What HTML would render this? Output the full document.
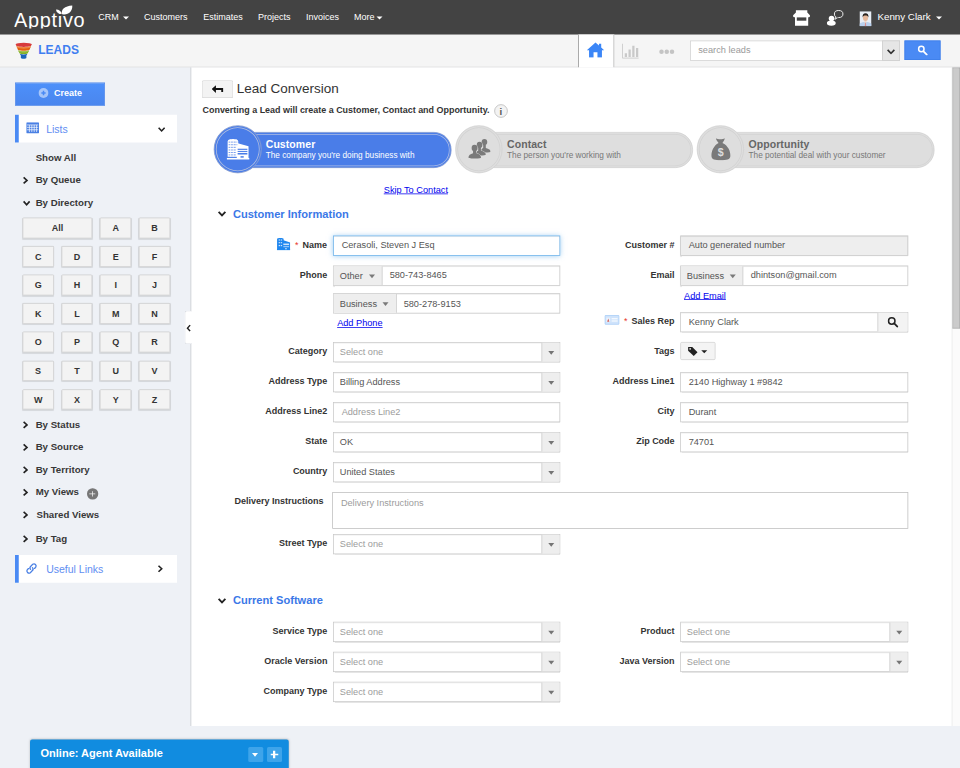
<!DOCTYPE html>
<html lang="en">
<head>
<meta charset="utf-8">
<title>Leads - Lead Conversion</title>
<style>
*{box-sizing:border-box;margin:0;padding:0}
html,body{width:960px;height:768px;overflow:hidden;background:#eef1f6}
body{font-family:"Liberation Sans",Arial,Helvetica,sans-serif;font-size:12px;color:#333}
#root{position:absolute;left:0;top:0;width:1280px;height:1024px;transform:scale(.75);transform-origin:0 0;background:#eef1f6;overflow:hidden}
.abs{position:absolute}
a{color:#0000ee;text-decoration:underline}
/* ---------- top bar ---------- */
#top{position:absolute;left:0;top:0;width:1280px;height:46.500px;background:#434343;border-bottom:1.300px solid #333}
#top .nav{position:absolute;top:0;height:46px;line-height:46px;color:#fff;font-size:12px;white-space:nowrap}
.caret{display:inline-block;width:0;height:0;border-left:4px solid transparent;border-right:4px solid transparent;border-top:4px solid #fff;vertical-align:middle;margin-left:3px}
/* ---------- sub bar ---------- */
#sub{position:absolute;left:0;top:46px;width:1280px;height:44.300px;background:#f5f5f5;border-bottom:1.600px solid #d2d2d2}
#sub .title{position:absolute;left:51px;top:0;line-height:42px;font-size:16px;font-weight:bold;color:#3f7ef0}

.logo{position:absolute;left:18.500px;top:8px;height:29.700px;overflow:hidden;font-size:26.500px;line-height:38px;color:#fff;letter-spacing:1px;font-weight:normal}
.hometab{position:absolute;left:770.700px;top:0;width:48.300px;height:44.300px;background:#fff;border-left:1.300px solid #8e8e8e;border-right:1.300px solid #b2b2b2}
.dots{position:absolute;left:879px;top:19.500px;width:24px;height:6px}
.dots i{display:block;float:left;width:6px;height:6px;border-radius:50%;background:#c4c4c4;margin-right:1.200px}
.srch{position:absolute;left:920px;top:8px;width:280px;height:27px;background:#fff;border:1px solid #d0d0d0}
.srch span{position:absolute;left:10px;top:0;line-height:24.500px;font-size:12.300px;color:#9a9a9a}
.srch b{position:absolute;right:-1px;top:-1px;width:24px;height:27px;background:#e6e6e6;border:1px solid #cdcdcd;display:block}
.srch b svg{position:absolute;left:5px;top:10px}
.sbtn{position:absolute;left:1206px;top:7.500px;width:48px;height:26px;background:#4a8af4;border:1px solid #3e7ee8}
.sbtn svg{position:absolute;left:16px;top:5px;width:14.500px;height:14.500px}
/* ---------- sidebar ---------- */
#side{position:absolute;left:0;top:90.300px;width:254px;height:935px;background:#eef1f6}

#sitems{position:absolute;left:0;top:0;width:256px;height:1024px}
.create{position:absolute;left:20px;top:110px;width:120px;height:31px;background:linear-gradient(#4d90fa,#4a86ee);border:1px solid #4481ea;color:#fff;font-weight:bold;font-size:12px;line-height:27.800px}
.create svg{position:absolute;left:30px;top:6.300px}
.create span{position:absolute;left:51px;top:0}
.sbox{position:absolute;left:20px;width:216px;height:37px;background:#fff;border-left:5px solid #4a8af4}
.sbt{position:absolute;top:1px;line-height:37px;font-size:14px;color:#5f8ef2}
.srow{position:absolute;left:0;width:250px;height:30px;line-height:30px;font-size:12.900px;font-weight:bold;color:#383838}
.srow span{position:absolute;left:47.500px;top:-1px;white-space:nowrap}
.srow .chv{position:absolute;left:30px;top:9.500px}
.srow .plus{position:absolute;left:116.300px;top:9.300px;width:14.500px;height:14.500px;border-radius:50%;background:#777}
.srow .plus:before{content:"";position:absolute;left:3.200px;top:6.400px;width:7.600px;height:1.200px;background:#f4f4f4}
.srow .plus:after{content:"";position:absolute;left:6.400px;top:3.200px;width:1.200px;height:7.600px;background:#f4f4f4}
.lb{position:absolute;width:41.700px;height:27.700px;background:#f3f3f3;border:1px solid #cdcdcd;border-radius:1.500px;text-align:center;font-weight:bold;font-size:12px;line-height:26px;color:#333;box-shadow:0 1px 1px rgba(0,0,0,.1)}
.handle{position:absolute;left:245.500px;top:413.500px;width:10.500px;height:45px;z-index:5;background:#fff;border:1px solid #dcdfe4;border-right:0;border-radius:3px 0 0 3px}
.handle svg{position:absolute;left:1.800px;top:17.500px}
/* ---------- content ---------- */
#main{position:absolute;left:253.700px;top:90.300px;width:1015.600px;height:877.500px;background:#fff;border-left:1.400px solid #c0c4ca}
#sbar{position:absolute;left:1269.300px;top:90.300px;width:10.700px;height:877.500px;background:#fbfbfb;border-left:1px solid #ececec}
#sbar i{position:absolute;left:-.4px;top:0;width:10.100px;height:348px;background:#cbcbcb;border-left:1.500px solid #b7b7b7;border-right:1.300px solid #afafaf;border-top:1.300px solid #b9b9b9;border-bottom:1.300px solid #b0b0b0}

/* ---------- main content ---------- */
#content{position:absolute;left:0;top:0;width:1280px;height:1024px}
.back{position:absolute;left:269.300px;top:106.800px;width:41.400px;height:24.500px;background:#f3f3f3;border:1px solid #d6d6d6;border-bottom-color:#cdcdcd;border-radius:2.500px}
.back svg{position:absolute;left:-.3px;top:-.8px}
.h1{position:absolute;left:315.500px;top:105.200px;font-size:18px;line-height:26px;color:#333;white-space:nowrap}
.subt{position:absolute;left:270px;top:138px;font-size:11.930px;font-weight:bold;line-height:18px;color:#333;white-space:nowrap}
.info{position:absolute;left:658.600px;top:138.700px;width:18.600px;height:18.600px;border:1px solid #b5b5b5;border-radius:50%;background:#f3f3f3;font-size:13px;font-weight:bold;line-height:17.500px;text-align:center;color:#555}
.pill{position:absolute;top:168px;width:316px;height:62.300px}
.pill .body{position:absolute;left:30px;top:8.200px;width:286.500px;height:47.600px;border-radius:0 23.500px 23.500px 0;background:#dedede;border:1px solid #d2d2d2;box-shadow:inset 0 0 0 1.500px #dedede,inset 0 0 0 2.500px #d4d4d4}
.pill .circ{position:absolute;left:-.5px;top:-.8px;width:63.800px;height:63.800px;border-radius:50%;background:#dedede;border:1px solid #d2d2d2;box-shadow:inset 0 0 0 1.800px #dedede,inset 0 0 0 2.800px #d2d2d2}
.pill.on .body{background:#4a7de8;border-color:#7f97cf;box-shadow:inset 0 0 0 1.500px #4a7de8,inset 0 0 0 2.500px #aebde4}
.pill.on .circ{background:#4a7de8;border-color:#8a9dcc;box-shadow:inset 0 0 0 1.800px #4a7de8,inset 0 0 0 2.800px #b4c0df}
.pill .ic{position:absolute}
.pill .pt{position:absolute;left:69px;top:15.500px;font-size:14px;font-weight:bold;line-height:16px;color:#666;white-space:nowrap;letter-spacing:.1px}
.pill .ps{position:absolute;left:69px;top:31.500px;font-size:11px;line-height:14px;color:#777;white-space:nowrap}
.pill.on .pt,.pill.on .ps{color:#fff}
.lnk{position:absolute;font-size:12.250px;line-height:14px;color:#0000ee;text-decoration:underline;white-space:nowrap}
.sec{position:absolute;left:290px;height:22px;width:400px}
.sec svg{position:absolute;left:0;top:7px}
.sec span{position:absolute;left:20.500px;top:-.5px;font-size:14.800px;font-weight:bold;line-height:22px;color:#3b78e7;white-space:nowrap}
.lbl{position:absolute;height:26.400px;line-height:24.200px;text-align:right;font-weight:bold;font-size:12px;color:#333;white-space:nowrap}
.lbl u{color:#e8352c;text-decoration:none;font-weight:normal;margin:0 2px 0 5px}
.lbl .lic{vertical-align:-3px}
.inp{position:absolute;height:26.700px;background:#fff;border:1px solid #c9c9c9;box-shadow:inset 0 1px 1px rgba(0,0,0,.075),0 1px 1px rgba(0,0,0,.1);font-size:12.250px;color:#555;line-height:24.700px}
.inp span{position:absolute;left:10.500px;top:.35px;white-space:nowrap}
.inp .ph{color:#9c9c9c}
.inp.foc{border-color:#66afe9;box-shadow:inset 0 1px 1px rgba(0,0,0,.075),0 0 7px rgba(102,175,233,.65)}
.inp.dis{background:#eee}
.inp.sel span{left:8px}
.inp.sel b{position:absolute;right:0;top:0;width:23.500px;height:24.700px;background:#eee;border-left:1px solid #ccc}
.inp.sel b i{position:absolute;left:7.400px;top:10.600px;border-left:4.100px solid transparent;border-right:4.100px solid transparent;border-top:5px solid #757575}
.inp em{position:absolute;left:0;top:0;height:24.700px;line-height:26.300px;background:#eee;border-right:1px solid #ccc;font-style:normal;padding-left:8px}
.inp em i{position:absolute;right:9.500px;top:11px;border-left:4.200px solid transparent;border-right:4.200px solid transparent;border-top:5.200px solid #7a7a7a}
.inp strong{position:absolute;right:0;top:0;width:39.500px;height:24.700px;background:#f3f3f3;border-left:1px solid #ccc}
.inp strong svg{position:absolute;left:12px;top:5px}
.inp.ta{box-shadow:none;border-color:#bdbdbd}
.inp.ta span{left:10.500px;top:1px}
.tagb{position:absolute;width:47.500px;height:24px;background:#f4f4f4;border:1px solid #d0d0d0;border-radius:2px}
.tagb svg{position:absolute;left:9px;top:4.500px}
.tagb i{position:absolute;left:27.500px;top:9.500px;border-left:4px solid transparent;border-right:4px solid transparent;border-top:4.500px solid #222}
/* ---------- chat ---------- */
.chat{position:absolute;left:40px;top:986px;width:345px;height:40px;background:#118ce0;border-radius:3px 3px 0 0;box-shadow:0 0 3px rgba(0,0,0,.25)}
.chat span{position:absolute;left:14px;top:0;line-height:37.600px;font-size:14.700px;font-weight:bold;color:#fff;white-space:nowrap}
.chat .cb{position:absolute;top:10px;width:19.500px;height:20px;background:#3ea4ea;border-radius:2px}
.chat .dn{position:absolute;left:5px;top:8px;border-left:4.500px solid transparent;border-right:4.500px solid transparent;border-top:5px solid #fff}
.chat .ph{position:absolute;left:5px;top:8.700px;width:9.500px;height:2.600px;background:#fff}
.chat .pv{position:absolute;left:8.450px;top:5.250px;width:2.600px;height:9.500px;background:#fff}
</style>
</head>
<body>
<div id="root">

<!-- TOP BAR -->
<div id="top">
  <div class="logo">Apptivo</div>
  <svg class="abs" style="left:73.160px;top:6.420px" width="25" height="13.750" viewBox="500 30 200 110"><path d="M579 133C562 84 606 46 687 41 692 96 652 138 598 137z" fill="#fff"/><path d="M574 131C570 100 546 84 513 83 516 114 540 132 574 131z" fill="#fff"/></svg>
  <div class="nav" style="left:131px">CRM <span class="caret" style="margin-left:2px"></span></div>
  <div class="nav" style="left:192px">Customers</div>
  <div class="nav" style="left:271px">Estimates</div>
  <div class="nav" style="left:344px">Projects</div>
  <div class="nav" style="left:408px">Invoices</div>
  <div class="nav" style="left:472px">More<span class="caret"></span></div>
  <!-- store icon -->
  <svg class="abs" style="left:1057px;top:13px" width="24" height="22" viewBox="0 0 24 22"><path d="M4.200.6h15.200v3.100l3.500 3.600v1.200a1.500 1.500 0 0 1-1.500 1.500h-.8v11.200H3V10H2a1.500 1.500 0 0 1-1.500-1.500V7.300l3.700-3.600z" fill="#fff"/><rect x="5.400" y="10.200" width="12.700" height="4.400" fill="#434343"/></svg>
  <!-- chat person icon -->
  <svg class="abs" style="left:1102px;top:13px" width="24" height="22" viewBox="0 0 24 22"><circle cx="6.700" cy="11.600" r="3.700" fill="#fff"/><ellipse cx="6.400" cy="17.700" rx="5.900" ry="3.500" fill="#fff"/><ellipse cx="16.200" cy="5.700" rx="5.700" ry="4.700" fill="none" stroke="#fff" stroke-width="1.200"/><path d="M12.600 9.200l-1.400 3.600 4-2.500z" fill="#434343" stroke="#fff" stroke-width="1.100" stroke-linejoin="round"/><path d="M12.900 8.600l2.700 1.500" stroke="#434343" stroke-width="1.600"/></svg>
  <!-- avatar -->
  <svg class="abs" style="left:1146px;top:15px" width="16" height="20" viewBox="0 0 16 20"><rect width="16" height="20" fill="#e9eef6"/><path d="M0 20v-3.4c1.8-1.6 4-2.4 8-2.4s6.2.8 8 2.4V20z" fill="#b9d0ee"/><path d="M6.6 12.6h2.8l-.2 3L8 17.2l-1.2-1.6z" fill="#f0d7c6"/><ellipse cx="8" cy="8.6" rx="3.4" ry="4.4" fill="#e6b89c"/><path d="M4.2 8.4C3.6 4.400 5.4 2.600 8 2.600s4.600 1.800 3.800 5.800C11.200 6.200 10.200 5.600 8 5.600S4.800 6.200 4.200 8.400z" fill="#2b2420"/><path d="M7.500 15.400h1l.5 4.600H7z" fill="#d98a8a"/></svg>
  <div class="nav" style="left:1170px;font-size:13px">Kenny Clark <span class="caret" style="margin-left:4px"></span></div>
</div>

<!-- SUB BAR -->
<div id="sub">
  <!-- funnel -->
  <svg class="abs" style="left:20px;top:10px" width="23" height="23" viewBox="0 0 23 23"><ellipse cx="11.600" cy="3.100" rx="10.700" ry="2.200" fill="#d73b3c"/><path d="M.9 3.100l1 2.300c4 1.500 15.400 1.500 19.400 0l1-2.300z" fill="#d73b3c"/><path d="M1.900 5.800c4 1.500 15.400 1.500 19.400 0l-2.100 4.800c-3.600 1.400-11.600 1.400-15.200 0z" fill="#e4600f"/><path d="M1.900 5.800c4 1.500 15.400 1.500 19.400 0l-.9 2c-3.800 1.400-13.800 1.400-17.600 0z" fill="#f0914c" fill-opacity=".8"/><path d="M4.200 11.300c3.600 1.300 11 1.300 14.600 0l-2 4.100c-2.600 1-8 1-10.600 0z" fill="#82b025"/><path d="M4.200 11.300c3.600 1.300 11 1.300 14.600 0l-.8 1.700c-3.200 1.200-9.800 1.200-13 0z" fill="#a2c653" fill-opacity=".8"/><path d="M6.900 16.100c2.400.8 6.800.8 9.200 0v1.300l-.9.300v3.600c0 1.400-7.400 1.400-7.400 0v-3.600l-.9-.3z" fill="#1c64b9"/></svg>
  <div class="title">LEADS</div>
  <div class="hometab"></div>
  <svg class="abs" style="left:782px;top:10.300px" width="24" height="21" viewBox="0 0 24 21"><path d="M12 .6L.4 11h3v9.600h6v-7h5.200v7h6V11h3L19.600 7.400V2.200h-3v2.400z" fill="#3b86f7"/></svg>
  <!-- chart icon -->
  <svg class="abs" style="left:829px;top:12px" width="23" height="22" viewBox="0 0 23 22"><path d="M1 0v19.500h21.500" stroke="#cfcfcf" stroke-width="1.300" fill="none"/><rect x="4" y="13" width="3" height="5" fill="#c9c9c9"/><rect x="9" y="8" width="3" height="10" fill="#c9c9c9"/><rect x="14" y="3" width="3" height="15" fill="#c9c9c9"/><rect x="19" y="6" width="3" height="12" fill="#c9c9c9"/></svg>
  <div class="dots"><i></i><i></i><i></i></div>
  <div class="srch"><span>search leads</span><b><svg width="12" height="8" viewBox="0 0 12 8"><path d="M1.500 1.500L6 6l4.500-4.500" stroke="#333" stroke-width="2.200" fill="none"/></svg></b></div>
  <div class="sbtn"><svg width="16" height="16" viewBox="0 0 16 16"><circle cx="6" cy="6" r="4" stroke="#fff" stroke-width="2.200" fill="none"/><path d="M9.200 9.200L14 14" stroke="#fff" stroke-width="2.600" stroke-linecap="round"/></svg></div>
</div>

<!-- SIDEBAR -->
<div id="side"></div>
<div id="sitems">
  <div class="create"><svg width="14" height="14" viewBox="0 0 14 14"><circle cx="7" cy="7" r="6.600" fill="#fff" fill-opacity=".5"/><path d="M7 4.100v5.800M4.100 7h5.800" stroke="#4a8af4" stroke-width="2"/></svg><span>Create</span></div>
  <div class="sbox" style="top:153px">
    <svg class="abs" style="left:10px;top:9.500px" width="17" height="15" viewBox="0 0 17 15"><rect width="17" height="15" rx="1" fill="#4a80e4"/><g stroke="#fff" stroke-width=".9"><path d="M1 3.600h15M1 6.800h15M1 10h15"/><path d="M4.200 3.600v9.600M7.400 3.600v9.600M10.600 3.600v9.600M13.800 3.600v9.600"/></g><rect x="1" y="13" width="15" height="1.200" fill="#4a80e4"/></svg>
    <span class="sbt" style="left:36.500px">Lists</span>
    <svg class="abs" style="left:184.500px;top:15.500px" width="11" height="8" viewBox="0 0 12 9"><path d="M1.500 1.500L6 6.300l4.500-4.800" stroke="#222" stroke-width="2.400" fill="none"/></svg>
  </div>
  <div class="srow" style="top:196.1px"><span>Show All</span></div>
  <div class="srow" style="top:225.5px"><svg class="chv" width="8" height="11" viewBox="0 0 8 11"><path d="M1.500 1.500L6 5.500 1.500 9.500" stroke="#222" stroke-width="2.200" fill="none"/></svg><span>By Queue</span></div>
  <div class="srow" style="top:255.7px"><svg class="chv" style="left:29.500px;top:11.800px" width="11" height="8" viewBox="0 0 11 8"><path d="M1.500 1.500L5.500 6l4-4.500" stroke="#222" stroke-width="2.200" fill="none"/></svg><span>By Directory</span></div>
  <div class="lb" style="left:30px;top:290.0px;width:93.400px">All</div>
  <div class="lb" style="left:133.400px;top:290.0px">A</div>
  <div class="lb" style="left:185.100px;top:290.0px">B</div>
  <div class="lb" style="left:30.0px;top:328.1px">C</div>
  <div class="lb" style="left:81.7px;top:328.1px">D</div>
  <div class="lb" style="left:133.4px;top:328.1px">E</div>
  <div class="lb" style="left:185.1px;top:328.1px">F</div>
  <div class="lb" style="left:30.0px;top:366.2px">G</div>
  <div class="lb" style="left:81.7px;top:366.2px">H</div>
  <div class="lb" style="left:133.4px;top:366.2px">I</div>
  <div class="lb" style="left:185.1px;top:366.2px">J</div>
  <div class="lb" style="left:30.0px;top:404.3px">K</div>
  <div class="lb" style="left:81.7px;top:404.3px">L</div>
  <div class="lb" style="left:133.4px;top:404.3px">M</div>
  <div class="lb" style="left:185.1px;top:404.3px">N</div>
  <div class="lb" style="left:30.0px;top:442.4px">O</div>
  <div class="lb" style="left:81.7px;top:442.4px">P</div>
  <div class="lb" style="left:133.4px;top:442.4px">Q</div>
  <div class="lb" style="left:185.1px;top:442.4px">R</div>
  <div class="lb" style="left:30.0px;top:480.5px">S</div>
  <div class="lb" style="left:81.7px;top:480.5px">T</div>
  <div class="lb" style="left:133.4px;top:480.5px">U</div>
  <div class="lb" style="left:185.1px;top:480.5px">V</div>
  <div class="lb" style="left:30.0px;top:518.6px">W</div>
  <div class="lb" style="left:81.7px;top:518.6px">X</div>
  <div class="lb" style="left:133.4px;top:518.6px">Y</div>
  <div class="lb" style="left:185.1px;top:518.6px">Z</div>
  <div class="srow" style="top:551.7px"><svg class="chv" width="8" height="11" viewBox="0 0 8 11"><path d="M1.500 1.500L6 5.500 1.500 9.500" stroke="#222" stroke-width="2.200" fill="none"/></svg><span>By Status</span></div>
  <div class="srow" style="top:582.2px"><svg class="chv" style="top:8.700px" width="8" height="11" viewBox="0 0 8 11"><path d="M1.500 1.500L6 5.500 1.500 9.500" stroke="#222" stroke-width="2.200" fill="none"/></svg><span>By Source</span></div>
  <div class="srow" style="top:611.7px"><svg class="chv" width="8" height="11" viewBox="0 0 8 11"><path d="M1.500 1.500L6 5.500 1.500 9.500" stroke="#222" stroke-width="2.200" fill="none"/></svg><span>By Territory</span></div>
  <div class="srow" style="top:642.2px"><svg class="chv" style="top:8.700px" width="8" height="11" viewBox="0 0 8 11"><path d="M1.500 1.500L6 5.500 1.500 9.500" stroke="#222" stroke-width="2.200" fill="none"/></svg><span>My Views</span><i class="plus"></i></div>
  <div class="srow" style="top:672.1px"><svg class="chv" style="top:8.700px" width="8" height="11" viewBox="0 0 8 11"><path d="M1.500 1.500L6 5.500 1.500 9.500" stroke="#222" stroke-width="2.200" fill="none"/></svg><span style="left:48.700px">Shared Views</span></div>
  <div class="srow" style="top:703.8px"><svg class="chv" width="8" height="11" viewBox="0 0 8 11"><path d="M1.500 1.500L6 5.500 1.500 9.500" stroke="#222" stroke-width="2.200" fill="none"/></svg><span>By Tag</span></div>
  <div class="sbox" style="top:740px">
    <svg class="abs" style="left:8.800px;top:9.500px" width="16" height="16" viewBox="0 0 17 17"><g fill="none" stroke="#4a80e4" stroke-width="1.800" stroke-linecap="round"><path d="M7.200 9.800a3 3 0 0 1 0-4.200l3-3a3 3 0 0 1 4.200 4.200l-1.600 1.600"/><path d="M9.800 7.200a3 3 0 0 1 0 4.200l-3 3a3 3 0 0 1-4.200-4.200l1.600-1.600"/></g></svg>
    <span class="sbt" style="left:36.500px">Useful Links</span>
    <svg class="abs" style="left:184.500px;top:13.200px" width="8" height="10.700" viewBox="0 0 9 12"><path d="M1.500 1.500L6.300 6 1.500 10.500" stroke="#222" stroke-width="2.400" fill="none"/></svg>
  </div>
  <div class="handle"><svg width="7" height="11" viewBox="0 0 7 11"><path d="M5.500 1.500L2 5.500l3.500 4" stroke="#222" stroke-width="2" fill="none"/></svg></div>
</div>

<!-- MAIN -->
<div id="main"></div>
<div id="sbar"><i></i></div>
<div id="content">
<div class="back"><svg width="40" height="24" viewBox="0 0 40 24"><path d="M12.300 11.800L17.900 6.600v3.800h9.600v5.400h-2.500v-2.900h-7.100v4.100z" fill="#111"/></svg></div>
<div class="h1">Lead Conversion</div>
<div class="subt">Converting a Lead will create a Customer, Contact and Opportunity.</div>
<div class="info">i</div>
<div class="pill on" style="left:285.300px"><div class="body"></div><div class="circ"></div>
<svg class="ic" style="left:17.200px;top:17.200px" width="30.900" height="28.300" viewBox="225 190 405 370"><g fill="#fff"><path d="M245 505V238c0-30 42-43 92-43s93 13 93 43v267z"/><path d="M405 262l205 60v218H405z"/><rect x="230" y="525" width="395" height="30"/></g><g stroke="#4a7de8" stroke-width="15" opacity=".85"><path d="M262 248h152M262 294h152M262 340h130M262 386h130M262 430h130M262 472h130"/></g><g stroke="#fff" stroke-width="13"><path d="M297 200v300M344 195v305M393 200v300"/></g><g fill="#4a7de8"><rect x="420" y="364" width="170" height="20"/><rect x="420" y="402" width="170" height="18"/><rect x="420" y="438" width="170" height="27"/><rect x="470" y="494" width="56" height="26"/></g></svg>
<div class="pt">Customer</div><div class="ps">The company you're doing business with</div></div>
<div class="pill" style="left:607px"><div class="body"></div><div class="circ"></div>
<svg class="ic" style="left:16.500px;top:17.200px" width="30.550" height="26.730" viewBox="220 190 400 350"><g fill="none" stroke="#dedede" stroke-width="14"><ellipse cx="507" cy="248" rx="49" ry="55"/><path d="M440 414C440 370 464 362 485 350V300h46v50C556 362 616 370 616 414 616 436 440 436 440 414z"/></g><g fill="#7a7a7a"><ellipse cx="507" cy="248" rx="49" ry="55"/><path d="M440 414C440 370 464 362 485 350V300h46v50C556 362 616 370 616 414 616 436 440 436 440 414z"/></g><g fill="none" stroke="#dedede" stroke-width="14"><ellipse cx="422" cy="298" rx="49" ry="55"/><path d="M345 464C345 420 372 410 398 398V350h48v48C476 410 531 420 531 464 531 486 345 486 345 464z"/></g><g fill="#7a7a7a"><ellipse cx="422" cy="298" rx="49" ry="55"/><path d="M345 464C345 420 372 410 398 398V350h48v48C476 410 531 420 531 464 531 486 345 486 345 464z"/></g><g fill="none" stroke="#dedede" stroke-width="14"><ellipse cx="335" cy="352" rx="52" ry="58"/><path d="M228 518C228 470 262 458 308 442V396h54v46C408 458 448 470 448 518 448 542 228 542 228 518z"/></g><g fill="#7a7a7a"><ellipse cx="335" cy="352" rx="52" ry="58"/><path d="M228 518C228 470 262 458 308 442V396h54v46C408 458 448 470 448 518 448 542 228 542 228 518z"/></g></svg>
<div class="pt">Contact</div><div class="ps">The person you're working with</div></div>
<div class="pill" style="left:929px"><div class="body"></div><div class="circ"></div>
<svg class="ic" style="left:19.400px;top:15.650px" width="26.350" height="30.170" viewBox="250 170 345 395"><path d="M336 176C372 198 454 198 490 176 486 216 462 238 450 258 545 300 592 400 588 484 586 546 520 557 422 557 322 557 260 546 258 484 254 400 300 300 382 258 370 238 340 216 336 176z" fill="#7a7a7a"/><text x="419" y="483" font-size="186" font-weight="bold" text-anchor="middle" fill="#dedede" font-family="Liberation Sans,Arial,sans-serif">$</text></svg>
<div class="pt">Opportunity</div><div class="ps">The potential deal with your customer</div></div>
<a class="lnk" style="left:511.700px;top:246px">Skip To Contact</a>
<div class="sec" style="top:274.0px"><svg width="12" height="9" viewBox="0 0 12 9"><path d="M1.500 1.500L6 6.300l4.500-4.800" stroke="#222" stroke-width="2.400" fill="none"/></svg><span>Customer Information</span></div>
<svg class="abs" style="left:368.900px;top:316.600px" width="18.330" height="17.080" viewBox="150 110 440 410"><g fill="#1f87ef"><path d="M160 505V150c0-25 52-33 105-33s105 8 105 33v355z"/><path d="M340 185l240 77v243H340z"/><rect x="155" y="468" width="428" height="42"/></g><g fill="#cde3fb"><rect x="212" y="165" width="46" height="34"/><rect x="280" y="165" width="42" height="34"/><rect x="212" y="250" width="46" height="36"/><rect x="280" y="250" width="42" height="36"/><rect x="212" y="340" width="46" height="40"/><rect x="280" y="340" width="42" height="40"/><rect x="360" y="295" width="186" height="50"/><rect x="360" y="385" width="186" height="26"/></g><ellipse cx="445" cy="462" rx="30" ry="17" fill="#fff"/></svg>
<div class="lbl" style="left:236px;top:314.100px;width:200px"><u>*</u> Name</div>
<div class="inp foc" style="left:444px;top:314.100px;width:302.700px"><span>Cerasoli, Steven J Esq</span></div>
<div class="lbl" style="left:236.5px;top:354.1px;width:200.0px">Phone</div>
<div class="inp" style="left:444.0px;top:354.1px;width:302.7px"><em style="width:65.0px">Other<i></i></em><span style="left:74.5px">580-743-8465</span></div>
<div class="inp" style="left:444.0px;top:391.2px;width:302.7px"><em style="width:83.7px">Business<i></i></em><span style="left:93.2px">580-278-9153</span></div>
<a class="lnk" style="left:449.500px;top:424px">Add Phone</a>
<div class="lbl" style="left:236.5px;top:456.0px;width:200.0px">Category</div>
<div class="inp sel" style="left:444.0px;top:456.0px;width:302.7px"><span class="ph">Select one</span><b><i></i></b></div>
<div class="lbl" style="left:236.5px;top:496.0px;width:200.0px">Address Type</div>
<div class="inp sel" style="left:444.0px;top:496.0px;width:302.7px"><span class="">Billing Address</span><b><i></i></b></div>
<div class="lbl" style="left:236.5px;top:536.0px;width:200.0px">Address Line2</div>
<div class="inp " style="left:444.0px;top:536.0px;width:302.7px"><span class="ph">Address Line2</span></div>
<div class="lbl" style="left:236.5px;top:576.0px;width:200.0px">State</div>
<div class="inp sel" style="left:444.0px;top:576.0px;width:302.7px"><span class="">OK</span><b><i></i></b></div>
<div class="lbl" style="left:236.5px;top:616.0px;width:200.0px">Country</div>
<div class="inp sel" style="left:444.0px;top:616.0px;width:302.7px"><span class="">United States</span><b><i></i></b></div>
<div class="lbl" style="left:231.5px;top:656.0px;width:200.0px">Delivery Instructions</div>
<div class="inp ta" style="left:443px;top:656px;width:767.700px;height:48.600px"><span class="ph">Delivery Instructions</span></div>
<div class="lbl" style="left:236.5px;top:712.0px;width:200.0px">Street Type</div>
<div class="inp sel" style="left:444.0px;top:712.0px;width:302.7px"><span class="ph">Select one</span><b><i></i></b></div>
<div class="lbl" style="left:699.5px;top:314.1px;width:200.0px">Customer #</div>
<div class="inp dis" style="left:906.7px;top:314.1px;width:304.0px"><span class="">Auto generated number</span></div>
<div class="lbl" style="left:699.5px;top:354.1px;width:200.0px">Email</div>
<div class="inp" style="left:906.7px;top:354.1px;width:304.0px"><em style="width:83.7px">Business<i></i></em><span style="left:93.2px">dhintson@gmail.com</span></div>
<a class="lnk" style="left:912px;top:387.200px">Add Email</a>
<div class="lbl" style="left:699.500px;top:416.400px;width:200px"><svg class="lic" style="margin-right:1px;vertical-align:-1px" width="20" height="13" viewBox="0 0 20 13"><rect x=".5" y=".5" width="19" height="12" rx="1" fill="#cfe3fb" stroke="#9cc6f5"/><rect x="2.500" y="3.500" width="5" height="6" fill="#eaf3fe"/><path d="M3.500 9l1.500-4.500L6.500 9z" fill="#d0605a"/><path d="M9.500 5h8M9.500 8h8" stroke="#fff" stroke-width="1.400"/></svg><u>*</u> Sales Rep</div>
<div class="inp" style="left:906.700px;top:416px;width:304px"><span>Kenny Clark</span><strong><svg width="15" height="15" viewBox="0 0 15 15"><circle cx="6" cy="6" r="4.300" stroke="#222" stroke-width="2" fill="none"/><path d="M9.300 9.300L13.500 13.500" stroke="#222" stroke-width="2.400" stroke-linecap="round"/></svg></strong></div>
<div class="lbl" style="left:699.5px;top:455.8px;width:200.0px">Tags</div>
<div class="tagb" style="left:906.700px;top:456px"><svg width="14" height="13" viewBox="0 0 14 13"><path d="M.5.5h5.500l7 7L8 12.500l-7.500-7z" fill="#222"/><circle cx="3.200" cy="3.200" r="1.100" fill="#f4f4f4"/></svg><i></i></div>
<div class="lbl" style="left:699.5px;top:496.0px;width:200.0px">Address Line1</div>
<div class="inp " style="left:906.7px;top:496.0px;width:304.0px"><span class="">2140 Highway 1 #9842</span></div>
<div class="lbl" style="left:699.5px;top:536.0px;width:200.0px">City</div>
<div class="inp " style="left:906.7px;top:536.0px;width:304.0px"><span class="">Durant</span></div>
<div class="lbl" style="left:699.5px;top:576.0px;width:200.0px">Zip Code</div>
<div class="inp " style="left:906.7px;top:576.0px;width:304.0px"><span class="">74701</span></div>
<div class="sec" style="top:789.5px"><svg width="12" height="9" viewBox="0 0 12 9"><path d="M1.500 1.500L6 6.300l4.500-4.800" stroke="#222" stroke-width="2.400" fill="none"/></svg><span>Current Software</span></div>
<div class="lbl" style="left:236.5px;top:829.3px;width:200.0px">Service Type</div>
<div class="inp sel" style="left:444.0px;top:829.3px;width:302.7px"><span class="ph">Select one</span><b><i></i></b></div>
<div class="lbl" style="left:236.5px;top:869.3px;width:200.0px">Oracle Version</div>
<div class="inp sel" style="left:444.0px;top:869.3px;width:302.7px"><span class="ph">Select one</span><b><i></i></b></div>
<div class="lbl" style="left:236.5px;top:909.3px;width:200.0px">Company Type</div>
<div class="inp sel" style="left:444.0px;top:909.3px;width:302.7px"><span class="ph">Select one</span><b><i></i></b></div>
<div class="lbl" style="left:699.5px;top:829.3px;width:200.0px">Product</div>
<div class="inp sel" style="left:906.7px;top:829.3px;width:304.0px"><span class="ph">Select one</span><b><i></i></b></div>
<div class="lbl" style="left:699.5px;top:869.3px;width:200.0px">Java Version</div>
<div class="inp sel" style="left:906.7px;top:869.3px;width:304.0px"><span class="ph">Select one</span><b><i></i></b></div>
</div>
<!-- CHAT -->
<div class="chat"><span>Online: Agent Available</span><div class="cb" style="left:291px"><i class="dn"></i></div><div class="cb" style="left:316px"><i class="ph"></i><i class="pv"></i></div></div>

</div>
</body>
</html>
